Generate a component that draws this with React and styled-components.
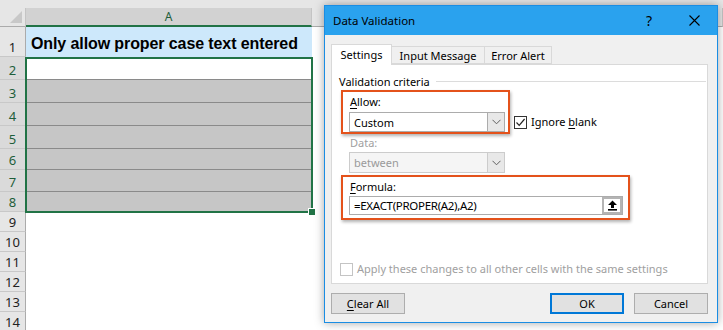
import React from 'react';
import styled, { createGlobalStyle } from 'styled-components';

const Global = createGlobalStyle`
  html, body { margin: 0; padding: 0; background: #fff; overflow: hidden; }
  #root { width: 723px; height: 330px; }
`;

const UI = '"Noto Sans", "Open Sans", sans-serif';

const Stage = styled.div`
  position: relative;
  width: 723px;
  height: 330px;
  overflow: hidden;
  background: #fff;
`;

/* ---------------- spreadsheet ---------------- */
const Sheet = styled.div`
  display: grid;
  grid-template-columns: 26px 286px 1fr;
  grid-template-rows: 8px 19px 30px 23px 23px 23px 23px 21px 22px 20px repeat(6, 20px);
  font-family: ${UI};
`;

const TopStrip = styled.div`
  grid-column: 1 / -1;
  background: #e6e6e6;
`;

const Corner = styled.div`
  position: relative;
  background: #e6e6e6;
  border-right: 1px solid #c4c4c4;
  border-bottom: 1px solid #ababab;
  box-sizing: border-box;
  &::after {
    content: '';
    position: absolute;
    right: 3px;
    bottom: 3px;
    width: 0;
    height: 0;
    border-left: 12px solid transparent;
    border-bottom: 12px solid #c8c8c8;
  }
`;

const ColHead = styled.div`
  box-sizing: border-box;
  background: ${p => (p.$selected ? '#d2d2d2' : '#e6e6e6')};
  border-right: 1px solid #c4c4c4;
  border-bottom: ${p => (p.$selected ? '2px solid #217346' : '1px solid #ababab')};
  color: ${p => (p.$selected ? '#1e5e3a' : '#444')};
  font-size: 12px;
  display: flex;
  align-items: center;
  justify-content: center;
`;

const RowHead = styled.div`
  box-sizing: border-box;
  background: ${p => (p.$selected ? '#dadada' : '#e6e6e6')};
  border-right: 1px solid #ababab;
  border-bottom: 1px solid #c8c8c8;
  color: ${p => (p.$selected ? '#1e5e3a' : '#222')};
  font-size: 13px;
  display: flex;
  align-items: flex-end;
  justify-content: center;
  padding-bottom: 1px;
  line-height: 16px;
`;

const Cell = styled.div`
  box-sizing: border-box;
  background: ${p => p.$bg};
  border-bottom: 1px solid ${p => p.$line};
  display: flex;
  align-items: flex-end;
  padding: 0 0 2px 5px;
`;

const Rest = styled.div`
  background: ${p => p.$bg};
`;

const TitleCellText = styled.span`
  font-family: "Liberation Sans", Arial, sans-serif;
  font-weight: bold;
  font-size: 16px;
  letter-spacing: -0.1px;
  color: #000;
  line-height: 20px;
`;

const Selection = styled.div`
  position: absolute;
  left: 25px;
  top: 57px;
  width: 288px;
  height: 156px;
  box-sizing: border-box;
  border: 2px solid #217346;
  pointer-events: none;
`;

const FillHandle = styled.div`
  position: absolute;
  left: 309px;
  top: 209px;
  width: 6px;
  height: 6px;
  background: #217346;
  outline: 1px solid #fff;
`;

/* ---------------- dialog ---------------- */
const Dialog = styled.div`
  position: absolute;
  left: 324px;
  top: 5px;
  width: 394px;
  height: 318px;
  box-sizing: border-box;
  border: 1px solid #1a8de3;
  background: #f0f0f0;
  box-shadow: 0 0 9px rgba(0, 0, 0, 0.35);
  display: flex;
  flex-direction: column;
  font-family: ${UI};
  font-size: 11px;
  color: #000;
`;

const TitleBar = styled.div`
  height: 29px;
  background: #2aa2ee;
  display: flex;
  align-items: center;
  padding-left: 8px;
`;

const TitleText = styled.div`
  flex: 1;
  font-size: 11.5px;
`;

const TitleBtn = styled.div`
  width: ${p => p.$w}px;
  margin-left: ${p => p.$ml || 0}px;
  display: flex;
  justify-content: center;
  align-items: center;
  font-size: 14px;
`;

const Body = styled.div`
  flex: 1;
  display: flex;
  flex-direction: column;
  padding: 9px 9px 0 6px;
`;

const Tabs = styled.div`
  display: flex;
  align-items: flex-end;
  height: 20px;
  position: relative;
  z-index: 1;
`;

const Tab = styled.div`
  box-sizing: border-box;
  width: ${p => p.$w}px;
  height: ${p => (p.$active ? 21 : 18)}px;
  margin-bottom: ${p => (p.$active ? -1 : 0)}px;
  background: ${p => (p.$active ? '#fff' : '#f0f0f0')};
  border: 1px solid #d9d9d9;
  border-bottom: ${p => (p.$active ? 'none' : '1px solid #d9d9d9')};
  border-left: ${p => (p.$first ? '1px solid #d9d9d9' : p.$active ? '1px solid #d9d9d9' : 'none')};
  display: flex;
  align-items: center;
  justify-content: center;
  padding-bottom: ${p => (p.$active ? 2 : 0)}px;
`;

const Panel = styled.div`
  box-sizing: border-box;
  width: 377px;
  height: 220px;
  background: #fff;
  border: 1px solid #d9d9d9;
  display: flex;
  flex-direction: column;
  padding: 9px 0 0 0;
`;

const Legend = styled.div`
  display: flex;
  align-items: center;
  padding-left: 7px;
  height: 15px;
  &::after {
    content: '';
    flex: 1;
    height: 1px;
    background: #dcdcdc;
    margin: 0 1px 0 6px;
  }
`;

const AllowRow = styled.div`
  display: flex;
  align-items: flex-start;
  margin: 1px 0 0 9px;
`;

const Highlight = styled.div`
  box-sizing: border-box;
  width: ${p => p.$w}px;
  height: ${p => p.$h}px;
  border: 2px solid #e4521b;
  box-shadow: 1px 2px 3px rgba(0, 0, 0, 0.3);
  padding: 2px ${p => p.$pr}px 0 6px;
  display: flex;
  flex-direction: column;
`;

const Label = styled.div`
  height: ${p => p.$h || 16}px;
  line-height: 16px;
  color: ${p => (p.$disabled ? '#a0a0a0' : '#000')};
  padding-left: 1px;
`;

const U = styled.span`
  text-decoration: underline;
  text-underline-offset: 2px;
`;

const Combo = styled.div`
  box-sizing: border-box;
  width: 156px;
  height: ${p => p.$h}px;
  border: 1px solid ${p => (p.$disabled ? '#cccccc' : '#acacac')};
  background: ${p => (p.$disabled ? '#f5f5f5' : '#fff')};
  display: flex;
  align-items: stretch;
`;

const ComboText = styled.div`
  flex: 1;
  display: flex;
  align-items: center;
  padding-left: 4px;
  color: ${p => (p.$disabled ? '#9a9a9a' : '#000')};
`;

const ComboBtn = styled.div`
  width: 17px;
  box-sizing: border-box;
  border-left: 1px solid ${p => (p.$disabled ? '#cccccc' : '#acacac')};
  background: #e8e8e8;
  display: flex;
  align-items: center;
  justify-content: center;
`;

const CheckRow = styled.div`
  display: flex;
  align-items: center;
  gap: 4px;
  margin: ${p => p.$m};
  color: ${p => (p.$disabled ? '#a0a0a0' : '#000')};
  line-height: 14px;
`;

const Box = styled.span`
  box-sizing: border-box;
  width: 13px;
  height: 13px;
  border: 1px solid ${p => (p.$disabled ? '#c4c4c4' : '#333')};
  background: #fff;
  display: flex;
  align-items: center;
  justify-content: center;
`;

const DataBlock = styled.div`
  display: flex;
  flex-direction: column;
  margin: 1px 0 0 17px;
`;

const FormulaWrap = styled.div`
  margin: 2px 0 0 9px;
`;

const Input = styled.div`
  box-sizing: border-box;
  width: 274px;
  height: 19px;
  border: 1px solid #acacac;
  background: #fff;
  display: flex;
  align-items: center;
  margin-top: -1px;
`;

const InputText = styled.div`
  flex: 1;
  padding-left: 4px;
  font-size: 11.5px;
  letter-spacing: -0.3px;
`;

const RefBtn = styled.div`
  box-sizing: border-box;
  width: 20px;
  height: 17px;
  border: 2px solid #b4b4b4;
  background: #fff;
  display: flex;
  align-items: center;
  justify-content: center;
`;

const Buttons = styled.div`
  display: flex;
  align-items: center;
  margin-top: 9px;
`;

const Button = styled.div`
  box-sizing: border-box;
  width: 74px;
  height: 21px;
  background: #e1e1e1;
  border: ${p => (p.$primary ? '2px solid #0078d7' : '1px solid #adadad')};
  display: flex;
  align-items: center;
  justify-content: center;
  margin-left: ${p => p.$ml || 0}px;
`;

const Spacer = styled.div`
  flex: 1;
`;

const Chevron = () => (
  <svg width="9" height="6" viewBox="0 0 9 6">
    <path d="M0.5 0.8 L4.5 4.8 L8.5 0.8" fill="none" stroke="#606060" strokeWidth="1" />
  </svg>
);

const Check = () => (
  <svg width="11" height="11" viewBox="0 0 11 11">
    <path d="M1.5 5.5 L4.2 8.3 L9.6 2" fill="none" stroke="#222" strokeWidth="1.2" />
  </svg>
);

const UpArrow = () => (
  <svg width="11" height="11" viewBox="0 0 11 11">
    <path d="M5.5 0.5 L10 5 L7 5 L7 8 L4 8 L4 5 L1 5 Z" fill="#000" />
    <rect x="1" y="9" width="9" height="1.6" fill="#000" />
  </svg>
);

const CloseIcon = () => (
  <svg width="11" height="11" viewBox="0 0 11 11">
    <path d="M0.5 0.5 L10.5 10.5 M10.5 0.5 L0.5 10.5" stroke="#000" strokeWidth="1.1" />
  </svg>
);

const rows = [
  { n: 1, kind: 'title' },
  { n: 2, kind: 'white' },
  { n: 3, kind: 'gray' },
  { n: 4, kind: 'gray' },
  { n: 5, kind: 'gray' },
  { n: 6, kind: 'gray' },
  { n: 7, kind: 'gray' },
  { n: 8, kind: 'gray' },
  { n: 9, kind: 'empty' },
  { n: 10, kind: 'empty' },
  { n: 11, kind: 'empty' },
  { n: 12, kind: 'empty' },
  { n: 13, kind: 'empty' },
  { n: 14, kind: 'empty' },
];

const cellStyle = {
  title: { bg: '#cde8fb', line: '#cde8fb' },
  white: { bg: '#ffffff', line: '#8a8a8a' },
  gray: { bg: '#c6c6c6', line: '#8a8a8a' },
  empty: { bg: '#ffffff', line: '#ffffff' },
};

export default function App() {
  return (
    <Stage>
      <Global />
      <Sheet>
        <TopStrip />
        <Corner />
        <ColHead $selected>A</ColHead>
        <ColHead />
        {rows.map(r => {
          const s = cellStyle[r.kind];
          const sel = r.n >= 2 && r.n <= 8;
          return (
            <React.Fragment key={r.n}>
              <RowHead $selected={sel}>{r.n}</RowHead>
              <Cell $bg={s.bg} $line={s.line}>
                {r.kind === 'title' && <TitleCellText>Only allow proper case text entered</TitleCellText>}
              </Cell>
              <Rest $bg="#fff" />
            </React.Fragment>
          );
        })}
      </Sheet>
      <Selection />
      <FillHandle />

      <Dialog>
        <TitleBar>
          <TitleText>Data Validation</TitleText>
          <TitleBtn $w={30}>?</TitleBtn>
          <TitleBtn $w={16} $ml={22}><CloseIcon /></TitleBtn>
          <TitleBtn $w={15} />
        </TitleBar>
        <Body>
          <Tabs>
            <Tab $w={61} $active $first>Settings</Tab>
            <Tab $w={93}>Input Message</Tab>
            <Tab $w={67}>Error Alert</Tab>
          </Tabs>
          <Panel>
            <Legend>Validation criteria</Legend>
            <AllowRow>
              <Highlight $w={169} $h={44} $pr={3}>
                <Label $h={18}><U>A</U>llow:</Label>
                <Combo $h={20}>
                  <ComboText>Custom</ComboText>
                  <ComboBtn><Chevron /></ComboBtn>
                </Combo>
              </Highlight>
              <CheckRow $m="25px 0 0 4px">
                <Box><Check /></Box>
                <span>Ignore <U>b</U>lank</span>
              </CheckRow>
            </AllowRow>
            <DataBlock>
              <Label $disabled $h={17}>Data:</Label>
              <Combo $h={21} $disabled>
                <ComboText $disabled>between</ComboText>
                <ComboBtn $disabled><Chevron /></ComboBtn>
              </Combo>
            </DataBlock>
            <FormulaWrap>
              <Highlight $w={289} $h={45} $pr={5}>
                <Label $h={18}><U>F</U>ormula:</Label>
                <Input>
                  <InputText>=EXACT(PROPER(A2),A2)</InputText>
                  <RefBtn><UpArrow /></RefBtn>
                </Input>
              </Highlight>
            </FormulaWrap>
            <CheckRow $disabled $m="42px 0 0 8px">
              <Box $disabled />
              <span>Apply these changes to all other cells with the same settings</span>
            </CheckRow>
          </Panel>
          <Buttons>
            <Button><span><U>C</U>lear All</span></Button>
            <Spacer />
            <Button $primary>OK</Button>
            <Button $ml={10}>Cancel</Button>
          </Buttons>
        </Body>
      </Dialog>
    </Stage>
  );
}
